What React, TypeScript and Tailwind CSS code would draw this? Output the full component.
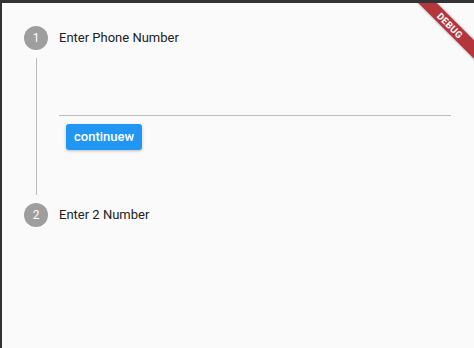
export default function App() {
  return (
    <div className="w-[474px] h-[348px] bg-[#333333] flex flex-col overflow-hidden font-['Roboto',sans-serif]">
      <div className="relative flex-1 mt-[3px] ml-[2px] bg-[#fafafa] overflow-hidden">
        {/* Debug banner */}
        <div className="absolute left-[388px] top-[16px] w-[120px] h-[13px] rotate-45 bg-[#b3363c] shadow-[0_0_3px_rgba(0,0,0,0.35)] flex items-center justify-center">
          <span className="text-white text-[9.5px] font-bold tracking-[0.3px] leading-none">DEBUG</span>
        </div>

        <div className="pt-[23px] pl-[22px] pr-[23px]">
          {/* Step 1 header */}
          <div className="flex items-center h-6">
            <div className="w-6 h-6 rounded-full bg-[#9e9e9e] flex items-center justify-center text-white text-xs">1</div>
            <div className="ml-[11px] text-[13px] text-[#212121]">Enter Phone Number</div>
          </div>

          {/* Step 1 body */}
          <div className="flex">
            <div className="w-6 flex justify-center">
              <div className="w-px my-2 bg-[#bdbdbd]" />
            </div>
            <div className="flex-1 ml-[11px] h-[153px]">
              <div className="h-[66px] border-b border-[#bdbdbd]" />
              <button className="mt-2 ml-[7px] h-[26px] px-2 rounded-[3px] bg-[#2196f3] text-white text-[13px] font-medium shadow-[0_1px_3px_rgba(0,0,0,0.25)]">
                continuew
              </button>
            </div>
          </div>

          {/* Step 2 header */}
          <div className="flex items-center h-6">
            <div className="w-6 h-6 rounded-full bg-[#9e9e9e] flex items-center justify-center text-white text-xs">2</div>
            <div className="ml-[11px] text-[13px] text-[#212121]">Enter 2 Number</div>
          </div>
        </div>
      </div>
    </div>
  );
}
